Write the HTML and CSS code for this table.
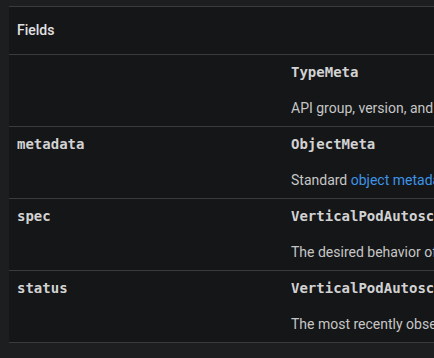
FILE: index.html
```html
<!DOCTYPE html>
<html>
<head>
<meta charset="utf-8">
<link rel="stylesheet" href="styles.css">
</head>
<body>
<div class="page">
  <table class="fields">
    <thead>
      <tr><th class="name-col">Fields</th><th class="desc-col"></th></tr>
    </thead>
    <tbody>
      <tr>
        <td class="name"></td>
        <td class="desc"><p class="type">TypeMeta</p><p class="text">API group, version, and kind of this resource.</p></td>
      </tr>
      <tr>
        <td class="name">metadata</td>
        <td class="desc"><p class="type">ObjectMeta</p><p class="text">Standard <a href="#">object metadata</a>.</p></td>
      </tr>
      <tr>
        <td class="name">spec</td>
        <td class="desc"><p class="type">VerticalPodAutoscalerSpec</p><p class="text">The desired behavior of the autoscaler.</p></td>
      </tr>
      <tr>
        <td class="name">status</td>
        <td class="desc"><p class="type">VerticalPodAutoscalerStatus</p><p class="text">The most recently observed status of the autoscaler.</p></td>
      </tr>
    </tbody>
  </table>
</div>
</body>
</html>
```
FILE: styles.css
```css
html, body {
  margin: 0;
  padding: 0;
  background: #1d1e20;
  overflow: hidden;
}
.page {
  padding: 6px 0 0 9px;
  width: 700px;
}
.fields {
  border-collapse: collapse;
  background: #151618;
  width: 700px;
  font-family: Roboto, "Liberation Sans", sans-serif;
  font-size: 14px;
  color: #c6c6c6;
}
.fields th, .fields td {
  border-top: 1px solid #3a3b3d;
  border-bottom: 1px solid #3a3b3d;
  text-align: left;
  vertical-align: top;
  padding: 7px 8px 8px 8px;
  line-height: 20px;
}
.fields th {
  padding-top: 13px;
  padding-bottom: 14px;
  font-weight: 500;
  font-size: 14px;
  color: #e2e2e2;
}
.name-col { width: 258px; }
.name {
  font-family: "DejaVu Sans Mono", "Liberation Mono", monospace;
  font-weight: bold;
  font-size: 14px;
  color: #d2d2d2;
}
.desc p { margin: 0; }
.type {
  font-family: "DejaVu Sans Mono", "Liberation Mono", monospace;
  font-weight: bold;
  font-size: 14px;
  color: #d2d2d2;
}
.text { margin-top: 16px !important; white-space: nowrap; }
.text a { color: #3d94e6; text-decoration: none; }
```
